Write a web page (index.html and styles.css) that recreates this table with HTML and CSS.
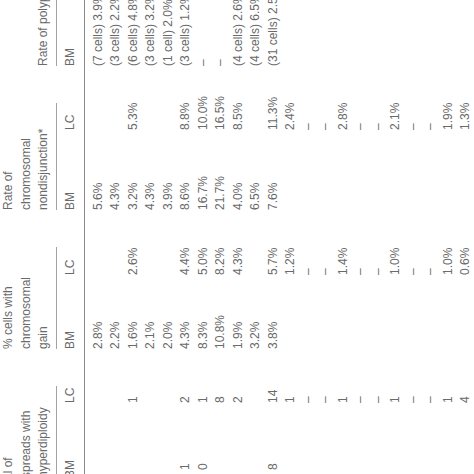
FILE: index.html
```html
<!DOCTYPE html>
<html>
<head>
<meta charset="utf-8">
<link rel="stylesheet" href="styles.css">
</head>
<body>
<div class="stage">
  <div class="sheet">
    <table class="tbl">
      <colgroup>
        <col class="w0"><col class="w1"><col class="w2"><col class="w3"><col class="w4"><col class="w5"><col class="w6"><col class="w7">
      </colgroup>
      <thead>
        <tr class="grprow">
          <th colspan="2"><div class="gh gh-first">Total of<br>spreads with<br>hyperdiploidy</div></th>
          <th colspan="2"><div class="gh">% cells with<br>chromosomal<br>gain</div></th>
          <th colspan="2"><div class="gh">Rate of<br>chromosomal<br>nondisjunction*</div></th>
          <th colspan="2"><div class="gh">Rate of polyploidy</div></th>
        </tr>
        <tr class="subrow">
          <th>BM</th><th>LC</th><th>BM</th><th>LC</th><th>BM</th><th>LC</th><th>BM</th><th>LC</th>
        </tr>
      </thead>
      <tbody>
        <tr><td></td><td></td><td>2.8%</td><td></td><td>5.6%</td><td></td><td>(7 cells) 3.9%</td><td></td></tr>
        <tr><td></td><td></td><td>2.2%</td><td></td><td>4.3%</td><td></td><td>(3 cells) 2.2%</td><td></td></tr>
        <tr><td></td><td>1</td><td>1.6%</td><td>2.6%</td><td>3.2%</td><td>5.3%</td><td>(6 cells) 4.8%</td><td></td></tr>
        <tr><td></td><td></td><td>2.1%</td><td></td><td>4.3%</td><td></td><td>(3 cells) 3.2%</td><td></td></tr>
        <tr><td></td><td></td><td>2.0%</td><td></td><td>3.9%</td><td></td><td>(1 cell) 2.0%</td><td></td></tr>
        <tr><td class="h0">1</td><td>2</td><td>4.3%</td><td>4.4%</td><td>8.6%</td><td>8.8%</td><td>(3 cells) 1.2%</td><td></td></tr>
        <tr><td class="h0">0</td><td>1</td><td>8.3%</td><td>5.0%</td><td>16.7%</td><td>10.0%</td><td>–</td><td></td></tr>
        <tr><td></td><td>8</td><td>10.8%</td><td>8.2%</td><td>21.7%</td><td>16.5%</td><td>–</td><td></td></tr>
        <tr><td></td><td>2</td><td>1.9%</td><td>4.3%</td><td>4.0%</td><td>8.5%</td><td>(4 cells) 2.6%</td><td></td></tr>
        <tr><td></td><td></td><td>3.2%</td><td></td><td>6.5%</td><td></td><td>(4 cells) 6.5%</td><td></td></tr>
        <tr><td class="h0">8</td><td>14</td><td>3.8%</td><td>5.7%</td><td>7.6%</td><td>11.3%</td><td>(31 cells) 2.5%</td><td></td></tr>
        <tr><td></td><td>1</td><td></td><td>1.2%</td><td></td><td>2.4%</td><td></td><td></td></tr>
        <tr><td></td><td>–</td><td></td><td>–</td><td></td><td>–</td><td></td><td></td></tr>
        <tr><td></td><td>–</td><td></td><td>–</td><td></td><td>–</td><td></td><td></td></tr>
        <tr><td></td><td>1</td><td></td><td>1.4%</td><td></td><td>2.8%</td><td></td><td></td></tr>
        <tr><td></td><td>–</td><td></td><td>–</td><td></td><td>–</td><td></td><td></td></tr>
        <tr><td></td><td>–</td><td></td><td>–</td><td></td><td>–</td><td></td><td></td></tr>
        <tr><td></td><td>1</td><td></td><td>1.0%</td><td></td><td>2.1%</td><td></td><td></td></tr>
        <tr><td></td><td>–</td><td></td><td>–</td><td></td><td>–</td><td></td><td></td></tr>
        <tr><td></td><td>–</td><td></td><td>–</td><td></td><td>–</td><td></td><td></td></tr>
        <tr><td></td><td>1</td><td></td><td>1.0%</td><td></td><td>1.9%</td><td></td><td></td></tr>
        <tr><td></td><td>4</td><td></td><td>0.6%</td><td></td><td>1.3%</td><td></td><td></td></tr>
      </tbody>
    </table>
  </div>
</div>
</body>
</html>
```
FILE: styles.css
```css
html, body {
  margin: 0;
  padding: 0;
  background: #ffffff;
}
.stage {
  width: 474px;
  height: 474px;
  overflow: hidden;
  background: #ffffff;
}
.sheet {
  width: 474px;
  height: 474px;
  transform: rotate(-90deg);
  transform-origin: 237px 237px;
}
.tbl {
  table-layout: fixed;
  width: 572px;
  border-collapse: separate;
  border-spacing: 0;
  margin-left: -7px;
  margin-top: -3px;
  font-family: "Liberation Sans", Arial, Helvetica, sans-serif;
  font-size: 12px;
  color: #6a6a6a;
}
.w0 { width: 75px; }
.w1 { width: 54px; }
.w2 { width: 74px; }
.w3 { width: 65px; }
.w4 { width: 80px; }
.w5 { width: 64px; }
.w6 { width: 80px; }
.w7 { width: 80px; }
.tbl th, .tbl td {
  padding: 0;
  text-align: left;
  font-weight: normal;
  white-space: nowrap;
  line-height: 17.5px;
}
.grprow th {
  vertical-align: bottom;
}
.gh {
  border-bottom: 1px solid #a3a3a3;
  padding-bottom: 3px;
  margin-right: 37px;
}
.gh-first {
  text-indent: -18px;
}
.subrow th {
  padding-top: 5px;
  padding-bottom: 5px;
  border-bottom: 1.5px solid #8a8a8a;
}
.tbl tbody td {
  vertical-align: baseline;
}
.tbl tbody tr:first-child td {
  padding-top: 4.5px;
}
.tbl td.h0 {
  padding-left: 8px;
}
```
